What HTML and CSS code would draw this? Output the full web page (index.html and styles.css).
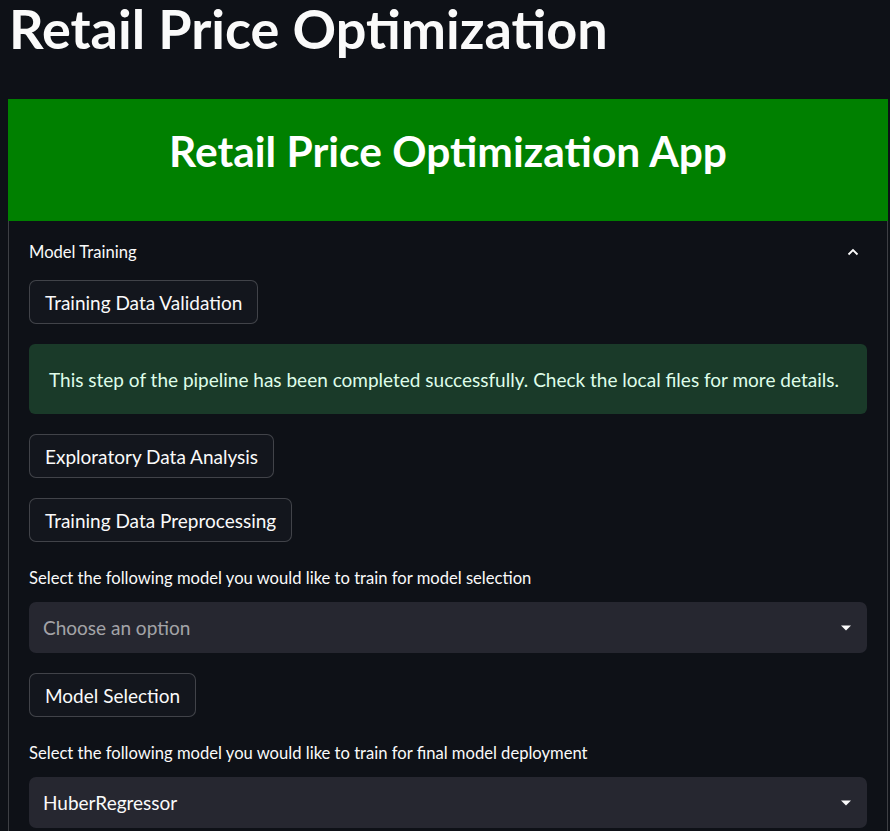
FILE: index.html
```html
<!DOCTYPE html>
<html>
<head>
  <meta charset="UTF-8">
  <title>Retail Price Optimization</title>
  <link rel="stylesheet" href="styles.css">
</head>
<body>
  <h1 class="page-title">Retail Price Optimization</h1>

  <div class="banner">
    <h2 class="banner-text">Retail Price Optimization App</h2>
  </div>

  <div class="expander">
    <div class="expander-header">
      <span>Model Training</span>
      <svg class="chevron" width="16" height="16" viewBox="0 0 16 16">
        <path d="M3.5 10.5 L8 6 L12.5 10.5" fill="none" stroke="#fafafa" stroke-width="1.8"/>
      </svg>
    </div>

    <div class="expander-body">
      <button class="st-button">Training Data Validation</button>

      <div class="success-box">
        This step of the pipeline has been completed successfully. Check the local files for more details.
      </div>

      <button class="st-button">Exploratory Data Analysis</button>
      <button class="st-button">Training Data Preprocessing</button>

      <div class="field">
        <label class="field-label">Select the following model you would like to train for model selection</label>
        <div class="select-box">
          <span class="placeholder">Choose an option</span>
          <svg class="caret" width="12" height="8" viewBox="0 0 12 8"><path d="M1 1.5 H11 L6 6.5 Z" fill="#fafafa"/></svg>
        </div>
      </div>

      <button class="st-button">Model Selection</button>

      <div class="field">
        <label class="field-label">Select the following model you would like to train for final model deployment</label>
        <div class="select-box">
          <span>HuberRegressor</span>
          <svg class="caret" width="12" height="8" viewBox="0 0 12 8"><path d="M1 1.5 H11 L6 6.5 Z" fill="#fafafa"/></svg>
        </div>
      </div>
    </div>
  </div>
</body>
</html>
```

FILE: styles.css
```css
body {
  margin: 0;
  padding: 0 2px 0 8px;
  background-color: #0e1117;
  color: #fafafa;
  font-family: Lato, "Noto Sans", sans-serif;
  overflow: hidden;
}

.page-title {
  margin: 0;
  padding: 0 0 0 1px;
  font-size: 54px;
  font-weight: 700;
  line-height: 64px;
  height: 99px;
  margin-top: -3px;
  margin-bottom: 3px;
}

.banner {
  background-color: #008000;
  height: 122px;
  display: flex;
  align-items: center;
  justify-content: center;
  box-sizing: border-box;
  padding-bottom: 20px;
}

.banner-text {
  margin: 0;
  font-size: 42.5px;
  font-weight: 700;
  color: #fff;
}

.expander {
  border: 1px solid rgba(250, 250, 250, 0.2);
  border-top: none;
  border-radius: 0 0 8px 8px;
  padding-bottom: 40px;
}

.expander-header {
  display: flex;
  justify-content: space-between;
  align-items: center;
  padding: 20px 26px 0 20px;
  height: 22px;
  font-size: 16.6px;
}

.chevron {
  display: block;
}

.expander-body {
  display: flex;
  flex-direction: column;
  align-items: flex-start;
  gap: 20px;
  padding: 17px 20px 0 20px;
}

.st-button {
  background-color: #13161d;
  color: #fafafa;
  border: 1px solid rgba(250, 250, 250, 0.2);
  border-radius: 7px;
  padding: 0 15px;
  height: 44px;
  font-family: inherit;
  font-size: 19px;
  cursor: pointer;
}

.success-box {
  align-self: stretch;
  background-color: #1a3a29;
  color: #dffde9;
  border-radius: 6px;
  padding: 0 20px;
  height: 70px;
  display: flex;
  align-items: center;
  font-size: 19px;
}

.field {
  align-self: stretch;
  display: flex;
  flex-direction: column;
  gap: 14px;
  margin-top: 6px;
}

.field-label {
  font-size: 16.6px;
  line-height: 20px;
}

.select-box {
  background-color: #262730;
  border-radius: 7px;
  height: 51px;
  display: flex;
  align-items: center;
  justify-content: space-between;
  padding: 0 15px 0 14px;
  font-size: 19px;
}

.placeholder {
  color: rgba(250, 250, 250, 0.6);
}

.caret {
  display: block;
}
```
